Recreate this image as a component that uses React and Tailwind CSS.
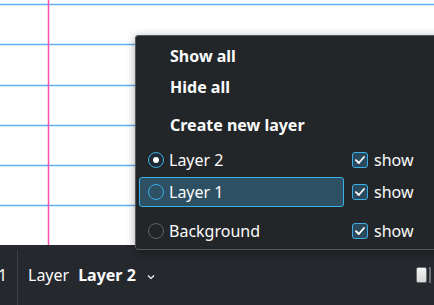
import React from "react";

const font = { fontFamily: '"Noto Sans", "Open Sans", sans-serif' };

const Radio = ({ state }) => {
  if (state === "checked") {
    return (
      <span className="block w-[16px] h-[16px] rounded-full border border-[#3daee9] bg-[#1d2a33] flex items-center justify-center">
        <span className="block w-[6px] h-[6px] rounded-full bg-[#fcfcfc]" />
      </span>
    );
  }
  if (state === "hover") {
    return <span className="block w-[16px] h-[16px] rounded-full border border-[#3daee9]" />;
  }
  return <span className="block w-[16px] h-[16px] rounded-full border border-[#5f6265]" />;
};

const Check = () => (
  <span className="w-[16px] h-[16px] rounded-[3px] border border-[#3daee9] bg-[#2a4a5c] flex items-center justify-center">
    <svg width="12" height="12" viewBox="0 0 12 12">
      <path d="M2 6.2 L4.8 9 L10 3" fill="none" stroke="#fcfcfc" strokeWidth="1.9" strokeLinecap="round" strokeLinejoin="round" />
    </svg>
  </span>
);

const LayerRow = ({ name, radio, highlight }) => (
  <div className="flex items-center h-[30px]">
    <div
      className={
        "ml-[3px] w-[205px] h-[30px] flex items-center rounded-[3px] border " +
        (highlight ? "border-[#3daee9] bg-[#2d5063]" : "border-transparent")
      }
    >
      <span className="ml-[8px]">
        <Radio state={radio} />
      </span>
      <span className="ml-[5px] text-[16px] text-[#fcfcfc]">{name}</span>
    </div>
    <span className="ml-[8px]">
      <Check />
    </span>
    <span className="ml-[6px] text-[16px] text-[#fcfcfc]">show</span>
  </div>
);

export default function App() {
  return (
    <div className="relative w-[434px] h-[305px] overflow-hidden bg-[#25282c]" style={font}>
      <div className="flex flex-col h-full">
        <div className="h-[245px] bg-white">
          <svg width="434" height="245" className="block">
            {[4, 44, 85, 125, 165, 205].map((y) => (
              <line key={y} x1="0" x2="434" y1={y + 0.5} y2={y + 0.5} stroke="#62aef4" strokeWidth="1.3" />
            ))}
            <line x1="48.5" x2="48.5" y1="0" y2="245" stroke="#ff4fae" strokeWidth="1.5" />
          </svg>
        </div>
        <div className="flex-1 flex items-center text-[16px] text-[#fcfcfc]">
          <span className="-ml-[2px] w-[19px]">1</span>
          <span className="self-end w-px h-[55px] bg-[#3e4145]" />
          <span className="ml-[10px]">Layer</span>
          <span className="ml-[9px] font-bold">Layer 2</span>
          <svg width="8" height="6" viewBox="0 0 8 6" className="ml-[11px] mt-[3px]">
            <path d="M1 1.5 L4 4.5 L7 1.5" fill="none" stroke="#fcfcfc" strokeWidth="1.2" />
          </svg>
          <span className="ml-auto mr-[3px] flex gap-[2px]">
            <span className="w-[11px] h-[16px] rounded-[2px] border border-[#6b6e72] bg-gradient-to-b from-[#f4f4f4] to-[#d8d8d8]" />
            <span className="w-[2px] h-[16px] bg-[#6b6e72]" />
          </span>
        </div>
      </div>

      <div className="absolute left-[135px] top-[35px] w-[310px] h-[215px] bg-[#232629] border border-[#54575b] rounded-[3px] shadow-[0_2px_10px_rgba(0,0,0,0.35)] text-[#fcfcfc]">
        <div className="pt-[4px] flex flex-col">
          <div className="h-[31px] flex items-center pl-[34px] text-[16px] font-bold">Show all</div>
          <div className="h-[31px] flex items-center pl-[34px] text-[16px] font-bold">Hide all</div>
          <div className="h-[8px]" />
          <div className="h-[30px] flex items-center pl-[34px] text-[16px] font-bold">Create new layer</div>
          <div className="h-[5px]" />
          <LayerRow name="Layer 2" radio="checked" />
          <div className="h-[2px]" />
          <LayerRow name="Layer 1" radio="hover" highlight />
          <div className="h-[9px]" />
          <LayerRow name="Background" radio="off" />
        </div>
      </div>
    </div>
  );
}
